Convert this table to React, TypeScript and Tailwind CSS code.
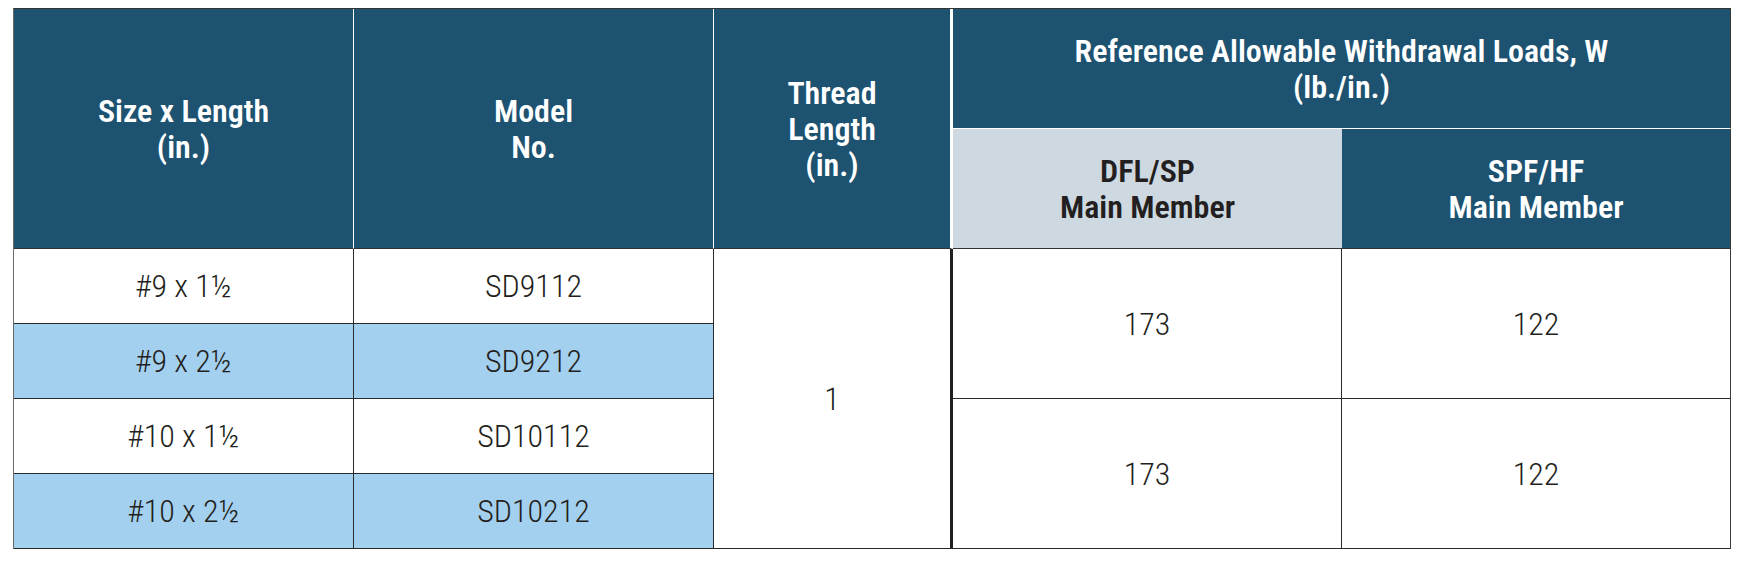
import React from "react";

export default function App() {
  const hd = "bg-[#1d5271] text-white font-semibold font-stretch-condensed text-[32px] leading-[36px] text-center align-middle p-0";
  const bd = "text-[#231f20] font-[350] font-stretch-condensed text-[32px] leading-[36px] text-center align-middle p-0 border-b border-[#2a2a2a]";
  const rows = [
    { size: "#9 x 1½", model: "SD9112", blue: false },
    { size: "#9 x 2½", model: "SD9212", blue: true },
    { size: "#10 x 1½", model: "SD10112", blue: false },
    { size: "#10 x 2½", model: "SD10212", blue: true },
  ];
  return (
    <div className="w-[1748px] h-[564px] bg-white pt-[8px] pl-[13px] font-['Roboto',sans-serif]">
      <table className="table-fixed border-separate border-spacing-0 w-[1718px] border-t border-l border-t-[#333333] border-l-[#6a6a6a]">
        <colgroup>
          <col className="w-[340px]" />
          <col className="w-[360px]" />
          <col className="w-[239px]" />
          <col className="w-[389px]" />
          <col className="w-[389px]" />
        </colgroup>
        <thead>
          <tr className="h-[120px]">
            <th rowSpan={2} className={`${hd} border-r border-r-white border-b border-b-[#333333]`}>
              Size x Length<br />(in.)
            </th>
            <th rowSpan={2} className={`${hd} border-r border-r-white border-b border-b-[#333333]`}>
              Model<br />No.
            </th>
            <th rowSpan={2} className={`${hd} border-r-[3px] border-r-white border-b border-b-[#333333]`}>
              Thread<br />Length<br />(in.)
            </th>
            <th colSpan={2} className={`${hd} border-b border-b-white border-r border-r-[#3a3a3a]`}>
              Reference Allowable Withdrawal Loads, W<br />(lb./in.)
            </th>
          </tr>
          <tr className="h-[120px]">
            <th className="bg-[#cdd8e1] text-[#231f20] font-semibold font-stretch-condensed text-[32px] leading-[36px] text-center align-middle p-0 border-b border-b-[#333333]">
              DFL/SP<br />Main Member
            </th>
            <th className={`${hd} border-b border-b-[#333333] border-r border-r-[#3a3a3a]`}>
              SPF/HF<br />Main Member
            </th>
          </tr>
        </thead>
        <tbody>
          {rows.map((r, i) => (
            <tr key={i} className="h-[75px]">
              <td className={`${bd} border-r border-r-[#2a2a2a] ${r.blue ? "bg-[#a4d0ef]" : "bg-white"}`}>{r.size}</td>
              <td className={`${bd} border-r border-r-[#2a2a2a] ${r.blue ? "bg-[#a4d0ef]" : "bg-white"}`}>{r.model}</td>
              {i === 0 && (
                <td rowSpan={4} className={`${bd} bg-white border-r-[3px] border-r-[#231f20]`}>1</td>
              )}
              {i % 2 === 0 && (
                <>
                  <td rowSpan={2} className={`${bd} bg-white border-r border-r-[#2a2a2a]`}>173</td>
                  <td rowSpan={2} className={`${bd} bg-white border-r border-r-[#3a3a3a]`}>122</td>
                </>
              )}
            </tr>
          ))}
        </tbody>
      </table>
    </div>
  );
}
